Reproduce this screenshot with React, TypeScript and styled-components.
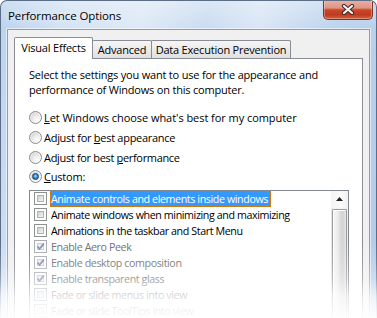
import React from "react";
import styled, { createGlobalStyle } from "styled-components";

const GlobalStyle = createGlobalStyle`
  html, body { margin: 0; padding: 0; background: #fff; }
  body {
    font-family: "Segoe UI", "Open Sans", "Noto Sans", sans-serif;
    font-size: 11px;
    letter-spacing: -0.2px;
    color: #000;
  }
  #root { position: relative; width: 377px; height: 318px; overflow: hidden; }
`;

const Frame = styled.div`
  position: relative;
  box-sizing: border-box;
  width: 377px;
  height: 340px;
  border: 1px solid #5b6e86;
  border-bottom: none;
  border-radius: 7px 7px 0 0;
  background:
    linear-gradient(180deg, rgba(255,255,255,0.3) 0px, rgba(255,255,255,0) 28px),
    linear-gradient(100deg, #bad2ee 0%, #d3e2f4 15%, #dde9f6 33%, #cadcf1 48%, #d9e6f5 60%, #bcd3ed 78%, #b2cbea 100%);
  display: flex;
  flex-direction: column;
  overflow: hidden;
`;

const TitleBar = styled.div`
  height: 28px;
  flex: none;
  display: flex;
  align-items: center;
  padding-left: 7px;
`;

const Title = styled.span`
  font-size: 11.5px;
  letter-spacing: -0.1px;
  color: #000;
  text-shadow: 0 0 6px rgba(255, 255, 255, 0.9);
`;

const CloseButton = styled.div`
  margin-left: auto;
  margin-right: 3px;
  margin-top: -1px;
  align-self: flex-start;
  box-sizing: border-box;
  width: 50px;
  height: 20px;
  border: 1px solid #7d3326;
  border-top: none;
  border-radius: 0 0 5px 5px;
  background: linear-gradient(180deg, #eab3a5 0%, #df9482 42%, #c9482c 52%, #c03a1e 78%, #d56240 100%);
  box-shadow: inset 0 0 0 1px rgba(255, 255, 255, 0.3);
  display: flex;
  align-items: center;
  justify-content: center;
`;

const Client = styled.div`
  flex: 1;
  margin: 0 6px;
  box-sizing: border-box;
  background: #f0f0f0;
  border: 1px solid #8a9eb6;
  border-bottom: none;
  box-shadow: 0 0 0 1px rgba(255, 255, 255, 0.55);
  padding: 7px 6px 0 6px;
  display: flex;
  flex-direction: column;
`;

const TabRow = styled.div`
  display: flex;
  align-items: flex-end;
  height: 22px;
  margin-bottom: -1px;
  position: relative;
  z-index: 1;
`;

const Tab = styled.div<{ $active?: boolean; $width: number }>`
  box-sizing: border-box;
  width: ${(p) => p.$width}px;
  height: ${(p) => (p.$active ? 22 : 18)}px;
  margin-bottom: ${(p) => (p.$active ? 0 : 1)}px;
  margin-left: ${(p) => (p.$active ? 0 : -1)}px;
  position: relative;
  z-index: ${(p) => (p.$active ? 2 : 1)};
  border: 1px solid #898c95;
  border-bottom: none;
  border-radius: 2px 2px 0 0;
  background: ${(p) =>
    p.$active ? "#fff" : "linear-gradient(180deg, #f5f5f5 0%, #ebebeb 50%, #e0e0e0 100%)"};
  display: flex;
  align-items: center;
  justify-content: center;
  padding-bottom: ${(p) => (p.$active ? 2 : 0)}px;
  white-space: nowrap;
`;

const Panel = styled.div`
  flex: 1;
  background: #fff;
  border: 1px solid #898c95;
  border-bottom: none;
  padding: 8px 14px 0 14px;
  display: flex;
  flex-direction: column;
`;

const Description = styled.p`
  margin: 0;
  line-height: 15px;
`;

const RadioGroup = styled.div`
  margin-top: 11px;
  display: flex;
  flex-direction: column;
`;

const RadioRow = styled.label`
  height: 19.7px;
  display: flex;
  align-items: center;
  gap: 2px;
  white-space: nowrap;
`;

const RadioText = styled.span<{ $spacing?: number }>`
  letter-spacing: ${(p) => p.$spacing ?? -0.2}px;
`;

const RadioCircle = styled.span<{ $checked?: boolean }>`
  flex: none;
  box-sizing: border-box;
  width: 13px;
  height: 13px;
  border-radius: 50%;
  border: 1px solid #8b8b8b;
  background: radial-gradient(circle at 65% 70%, #fdfdfd 0%, #eeeeee 35%, #cdcdcd 80%, #c4c4c4 100%);
  box-shadow: inset 0 0 0 1px rgba(255, 255, 255, 0.7);
  display: flex;
  align-items: center;
  justify-content: center;

  &::after {
    content: "";
    display: ${(p) => (p.$checked ? "block" : "none")};
    box-sizing: border-box;
    width: 7px;
    height: 7px;
    border-radius: 50%;
    border: 1px solid #173a66;
    background: radial-gradient(circle at 50% 40%, #a6dcff 0%, #3a96e0 45%, #0f4a8f 100%);
  }
`;

const ListBox = styled.div`
  margin-top: 3px;
  box-sizing: border-box;
  width: 320px;
  height: 140px;
  border: 1px solid #828790;
  border-bottom: none;
  background: #fff;
  display: flex;
`;

const Items = styled.div`
  flex: 1;
  padding-left: 4px;
  display: flex;
  flex-direction: column;
  font-size: 10.7px;
  letter-spacing: -0.4px;
`;

const Item = styled.div`
  height: 16px;
  flex: none;
  display: flex;
  align-items: center;
  gap: 3px;
  white-space: nowrap;
`;

const CheckBox = styled.span<{ $disabled?: boolean }>`
  position: relative;
  flex: none;
  box-sizing: border-box;
  width: 13px;
  height: 13px;
  border: 1px solid ${(p) => (p.$disabled ? "#a9adb2" : "#8e8f8f")};
  background: #fdfdfd;
  padding: 2px;
  display: flex;

  &::before {
    content: "";
    flex: 1;
    border: 1px solid ${(p) => (p.$disabled ? "#c9cdd1" : "#aeb3b9")};
    background: ${(p) =>
      p.$disabled
        ? "linear-gradient(135deg, #e6e8ea, #fafafa)"
        : "linear-gradient(135deg, #cbced3, #f6f6f6)"};
  }

  svg {
    position: absolute;
    left: 0;
    top: 0;
  }
`;

const ItemLabel = styled.span<{ $selected?: boolean; $disabled?: boolean }>`
  box-sizing: border-box;
  height: 16px;
  line-height: 14px;
  padding: 0 2px 0 0;
  border: 1px ${(p) => (p.$selected ? "dotted #d07a10" : "solid transparent")};
  background: ${(p) => (p.$selected ? "#3399ff" : "transparent")};
  color: ${(p) => (p.$selected ? "#fff" : p.$disabled ? "#6d6d6d" : "#000")};
`;

const ScrollBar = styled.div`
  width: 17px;
  flex: none;
  display: flex;
  flex-direction: column;
  background: linear-gradient(90deg, #e3e3e3 0px, #f1f1f1 3px, #f7f7f7 10px, #ededed 17px);
`;

const ArrowButton = styled.div`
  height: 17px;
  flex: none;
  display: flex;
  align-items: center;
  justify-content: center;
  background: linear-gradient(90deg, #f4f4f4, #fbfbfb 60%, #f0f0f0);
`;

const Thumb = styled.div`
  margin: 1px 1px 0 1px;
  flex: 1;
  border: 1px solid #9b9b9b;
  border-bottom: none;
  border-radius: 2px 2px 0 0;
  background: linear-gradient(90deg, #f6f6f6 0%, #ededed 35%, #dcdcdc 55%, #d3d3d3 75%, #e6e6e6 100%);
  box-shadow: inset 1px 1px 0 #fff;
`;

const Fade = styled.div`
  position: absolute;
  left: 0;
  right: 0;
  top: 240px;
  height: 78px;
  pointer-events: none;
  background: linear-gradient(
    180deg,
    rgba(255, 255, 255, 0) 0%,
    rgba(255, 255, 255, 0.15) 30%,
    rgba(255, 255, 255, 0.35) 50%,
    rgba(255, 255, 255, 0.75) 72%,
    rgba(255, 255, 255, 0.9) 90%,
    rgba(255, 255, 255, 0.96) 100%
  );
`;

type ListItem = { label: string; checked?: boolean; disabled?: boolean; selected?: boolean };

const items: ListItem[] = [
  { label: "Animate controls and elements inside windows", selected: true },
  { label: "Animate windows when minimizing and maximizing" },
  { label: "Animations in the taskbar and Start Menu" },
  { label: "Enable Aero Peek", checked: true, disabled: true },
  { label: "Enable desktop composition", checked: true, disabled: true },
  { label: "Enable transparent glass", checked: true, disabled: true },
  { label: "Fade or slide menus into view", disabled: true },
  { label: "Fade or slide ToolTips into view", disabled: true },
];

const CloseGlyph = () => (
  <svg width="14" height="11" viewBox="0 0 14 11">
    <path d="M3 2 L11 9 M11 2 L3 9" stroke="#3a2a28" strokeWidth="4.2" strokeLinecap="round" />
    <path d="M3 2 L11 9 M11 2 L3 9" stroke="#f4f4f4" strokeWidth="2.2" strokeLinecap="round" />
  </svg>
);

const CheckMark = ({ disabled }: { disabled?: boolean }) => (
  <svg width="11" height="11" viewBox="0 0 11 11">
    <path
      d="M2.5 5.5 L4.5 8 L8.8 2.6"
      fill="none"
      stroke={disabled ? "#7f8db0" : "#2c4a8a"}
      strokeWidth="1.7"
    />
  </svg>
);

const UpArrow = () => (
  <svg width="7" height="4" viewBox="0 0 7 4">
    <path d="M0 4 L3.5 0 L7 4 Z" fill="#222" />
  </svg>
);

export default function App() {
  return (
    <>
      <GlobalStyle />
      <Frame>
        <TitleBar>
          <Title>Performance Options</Title>
          <CloseButton>
            <CloseGlyph />
          </CloseButton>
        </TitleBar>
        <Client>
          <TabRow>
            <Tab $active $width={79}>Visual Effects</Tab>
            <Tab $width={60}>Advanced</Tab>
            <Tab $width={140}>Data Execution Prevention</Tab>
          </TabRow>
          <Panel>
            <Description>
              Select the settings you want to use for the appearance and
              <br />
              performance of Windows on this computer.
            </Description>
            <RadioGroup>
              <RadioRow>
                <RadioCircle />
                <RadioText $spacing={-0.05}>
                  <u>L</u>et Windows choose what's best for my computer
                </RadioText>
              </RadioRow>
              <RadioRow>
                <RadioCircle />
                <RadioText $spacing={-0.28}>
                  Adjust for <u>b</u>est appearance
                </RadioText>
              </RadioRow>
              <RadioRow>
                <RadioCircle />
                <RadioText $spacing={-0.33}>
                  Adjust for best <u>p</u>erformance
                </RadioText>
              </RadioRow>
              <RadioRow>
                <RadioCircle $checked />
                <RadioText>
                  <u>C</u>ustom:
                </RadioText>
              </RadioRow>
            </RadioGroup>
            <ListBox>
              <Items>
                {items.map((it) => (
                  <Item key={it.label}>
                    <CheckBox $disabled={it.disabled}>
                      {it.checked && <CheckMark disabled={it.disabled} />}
                    </CheckBox>
                    <ItemLabel $selected={it.selected} $disabled={it.disabled}>
                      {it.label}
                    </ItemLabel>
                  </Item>
                ))}
              </Items>
              <ScrollBar>
                <ArrowButton>
                  <UpArrow />
                </ArrowButton>
                <Thumb />
              </ScrollBar>
            </ListBox>
          </Panel>
        </Client>
      </Frame>
      <Fade />
    </>
  );
}
